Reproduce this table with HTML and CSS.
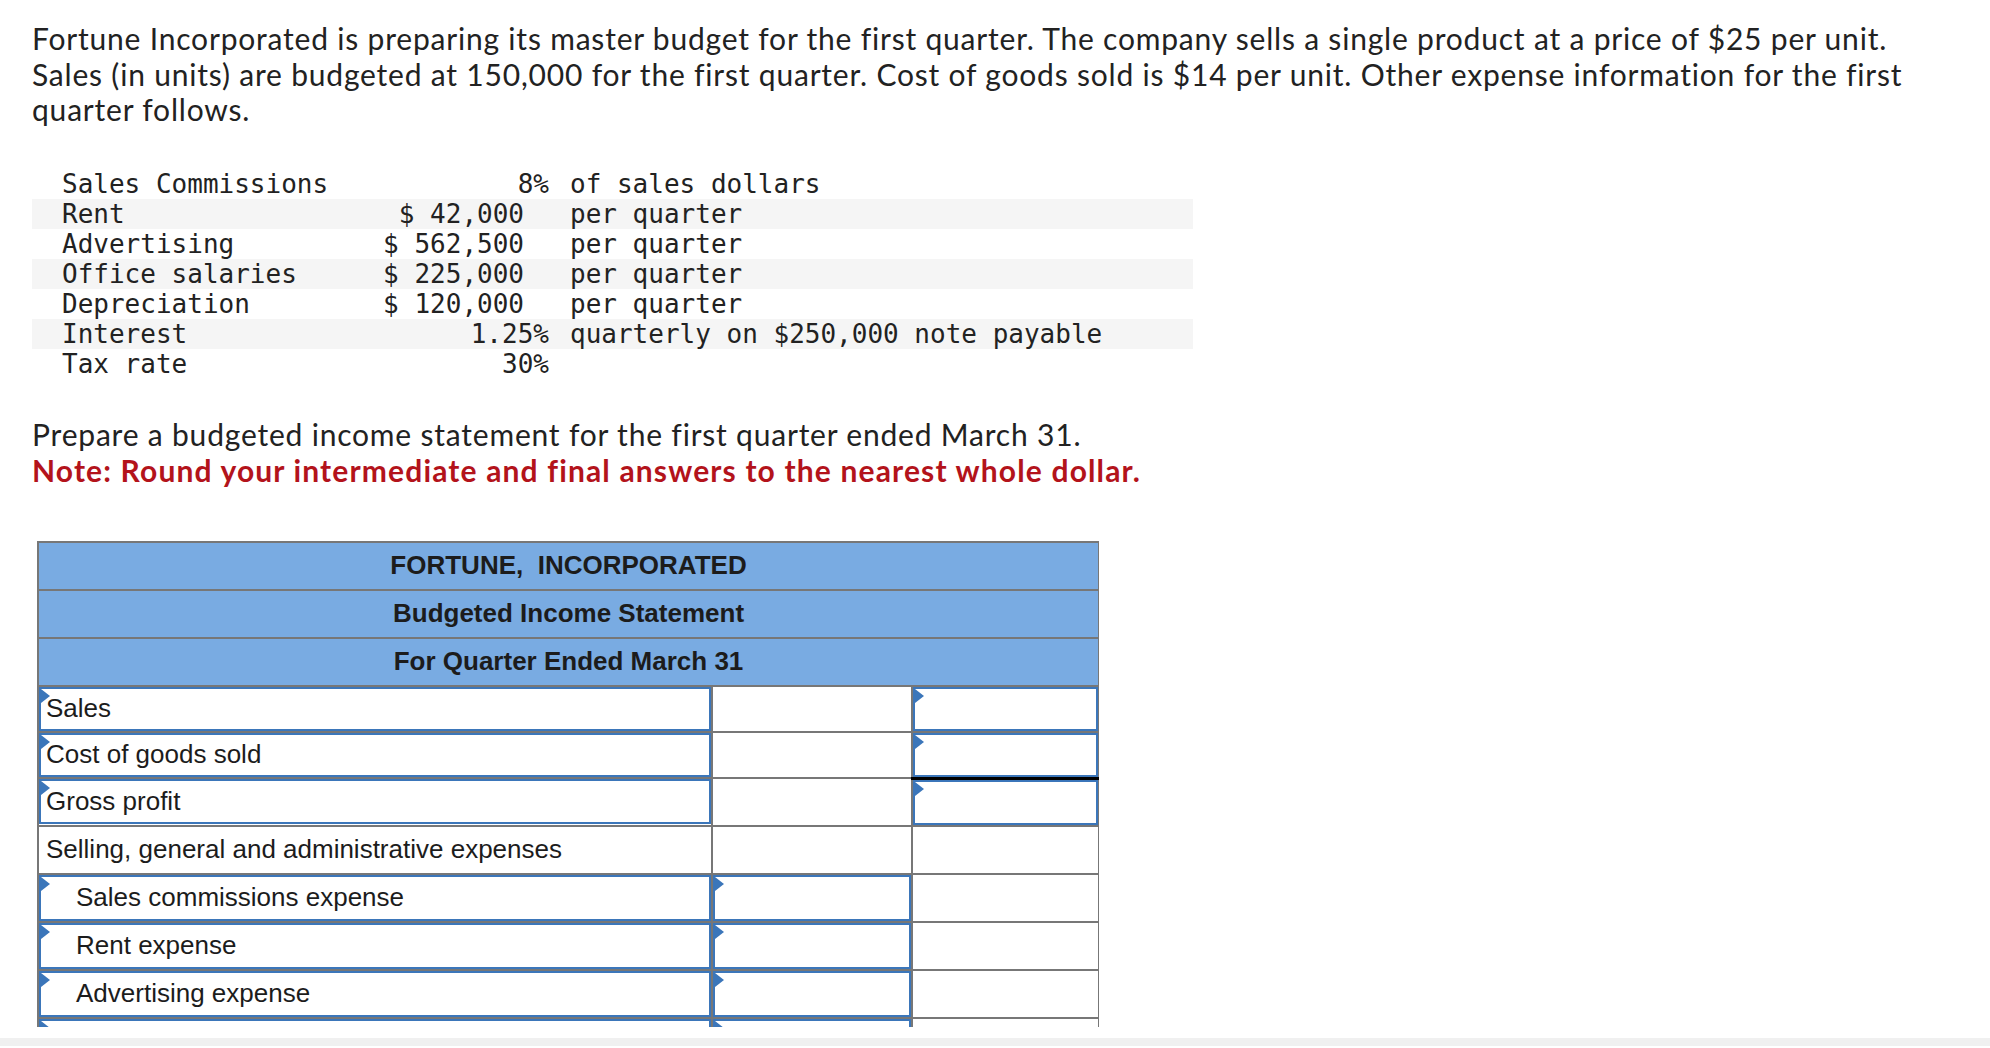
FILE: index.html
```html
<!DOCTYPE html>
<html lang="en">
<head>
<meta charset="utf-8">
<title>Fortune Incorporated - Budgeted Income Statement</title>
<link rel="stylesheet" href="styles.css">
</head>
<body>
<div class="page">
  <p class="intro">Fortune Incorporated is preparing its master budget for the first quarter. The company sells a single product at a price of $25 per unit. Sales (in units) are budgeted at 150,000 for the first quarter. Cost of goods sold is $14 per unit. Other expense information for the first quarter follows.</p>

  <table class="facts">
    <tr><td class="f-label">Sales Commissions</td><td class="f-val">8%</td><td class="f-desc">of sales dollars</td></tr>
    <tr class="shade"><td class="f-label">Rent</td><td class="f-val amt">$ 42,000</td><td class="f-desc">per quarter</td></tr>
    <tr><td class="f-label">Advertising</td><td class="f-val amt">$ 562,500</td><td class="f-desc">per quarter</td></tr>
    <tr class="shade"><td class="f-label">Office salaries</td><td class="f-val amt">$ 225,000</td><td class="f-desc">per quarter</td></tr>
    <tr><td class="f-label">Depreciation</td><td class="f-val amt">$ 120,000</td><td class="f-desc">per quarter</td></tr>
    <tr class="shade"><td class="f-label">Interest</td><td class="f-val">1.25%</td><td class="f-desc">quarterly on $250,000 note payable</td></tr>
    <tr><td class="f-label">Tax rate</td><td class="f-val">30%</td><td class="f-desc"></td></tr>
  </table>

  <p class="task">Prepare a budgeted income statement for the first quarter ended March 31.<br><strong class="note">Note: Round your intermediate and final answers to the nearest whole dollar.</strong></p>

  <div class="sheet-clip">
    <table class="sheet">
      <colgroup><col class="c1"><col class="c2"><col class="c3"></colgroup>
      <tr class="hd"><td colspan="3">FORTUNE,&nbsp; INCORPORATED</td></tr>
      <tr class="hd"><td colspan="3">Budgeted Income Statement</td></tr>
      <tr class="hd"><td colspan="3">For Quarter Ended March 31</td></tr>

      <tr class="r46">
        <td><div class="inp flag">Sales</div></td>
        <td><div class="blank"></div></td>
        <td><div class="inp flag"></div></td>
      </tr>
      <tr class="r46">
        <td><div class="inp flag">Cost of goods sold</div></td>
        <td><div class="blank"></div></td>
        <td class="underline"><div class="inp flag"></div></td>
      </tr>
      <tr class="r47">
        <td><div class="inp flag">Gross profit</div></td>
        <td><div class="blank"></div></td>
        <td><div class="inp flag"></div></td>
      </tr>
      <tr class="r48">
        <td><div class="blank txt">Selling, general and administrative expenses</div></td>
        <td><div class="blank"></div></td>
        <td><div class="blank"></div></td>
      </tr>
      <tr class="r48">
        <td><div class="inp flag indent">Sales commissions expense</div></td>
        <td><div class="inp flag"></div></td>
        <td><div class="blank"></div></td>
      </tr>
      <tr class="r48">
        <td><div class="inp flag indent">Rent expense</div></td>
        <td><div class="inp flag"></div></td>
        <td><div class="blank"></div></td>
      </tr>
      <tr class="r48">
        <td><div class="inp flag indent">Advertising expense</div></td>
        <td><div class="inp flag"></div></td>
        <td><div class="blank"></div></td>
      </tr>
      <tr class="r48">
        <td><div class="inp flag indent"></div></td>
        <td><div class="inp flag"></div></td>
        <td><div class="blank"></div></td>
      </tr>
    </table>
  </div>
  <div class="bottom-bar"></div>
</div>
</body>
</html>
```

FILE: styles.css
```css
html, body {
  margin: 0;
  padding: 0;
  background: #ffffff;
}

body {
  color: #222222;
  font-family: "Lato", "Liberation Sans", sans-serif;
  overflow: hidden;
}

.page {
  padding: 21px 0 0 0;
}

.intro {
  margin: 0 0 0 32px;
  width: 1910px;
  font-size: 30px;
  letter-spacing: 0.8px;
  line-height: 35.5px;
  color: #222222;
}

.facts {
  margin: 41px 0 0 32px;
  width: 1161px;
  border-collapse: collapse;
  table-layout: fixed;
  font-family: "DejaVu Sans Mono", "Liberation Mono", monospace;
  font-size: 26px;
  line-height: 30px;
  color: #222222;
}

.facts td {
  padding: 0;
  height: 30px;
  white-space: pre;
  vertical-align: middle;
}

.facts .shade td {
  background: #f5f5f5;
}

.f-label {
  width: 318px;
  padding-left: 30px !important;
}

.f-val {
  width: 169px;
  text-align: right;
}

.f-val.amt {
  padding-right: 25px !important;
}

.f-desc {
  padding-left: 21px !important;
}

.task {
  margin: 37px 0 0 32px;
  font-size: 30px;
  letter-spacing: 0.8px;
  line-height: 36px;
  color: #222222;
}

.note {
  color: #b3131b;
  font-weight: 700;
  letter-spacing: 1.15px;
}

.sheet-clip {
  margin: 53px 0 0 37px;
  width: 1062px;
  height: 486px;
  overflow: hidden;
}

.sheet {
  width: 1061px;
  border-collapse: collapse;
  table-layout: fixed;
  font-family: "Liberation Sans", Arial, sans-serif;
  font-size: 26px;
  color: #1c1c1c;
}

.sheet col.c1 { width: 674px; }
.sheet col.c2 { width: 200px; }
.sheet col.c3 { width: 187px; }

.sheet td {
  border: 2px solid #777777;
  padding: 0;
  vertical-align: top;
}

.sheet .hd td {
  background: #79abe2;
  height: 46px;
  text-align: center;
  vertical-align: middle;
  font-weight: 700;
}

.sheet td.underline {
  border-bottom: 3px solid #000000;
}

.inp,
.blank {
  box-sizing: border-box;
  display: flex;
  align-items: center;
  padding-left: 5px;
  white-space: nowrap;
}

.inp {
  position: relative;
  border: 2px solid #3b76ba;
  background: #ffffff;
}

.flag::before {
  content: "";
  position: absolute;
  left: 0;
  top: 0;
  width: 0;
  height: 0;
  border-left: 9px solid #3b76ba;
  border-top: 7px solid transparent;
  border-bottom: 7px solid transparent;
}

.blank.txt {
  padding-left: 7px;
}

.inp.indent {
  padding-left: 35px;
}

.r46 .inp, .r46 .blank { height: 44px; }
.r47 .inp, .r47 .blank { height: 45px; }
.r48 .inp, .r48 .blank { height: 46px; }

.bottom-bar {
  margin-top: 11px;
  height: 8px;
  background: #f0f0f0;
}
```
